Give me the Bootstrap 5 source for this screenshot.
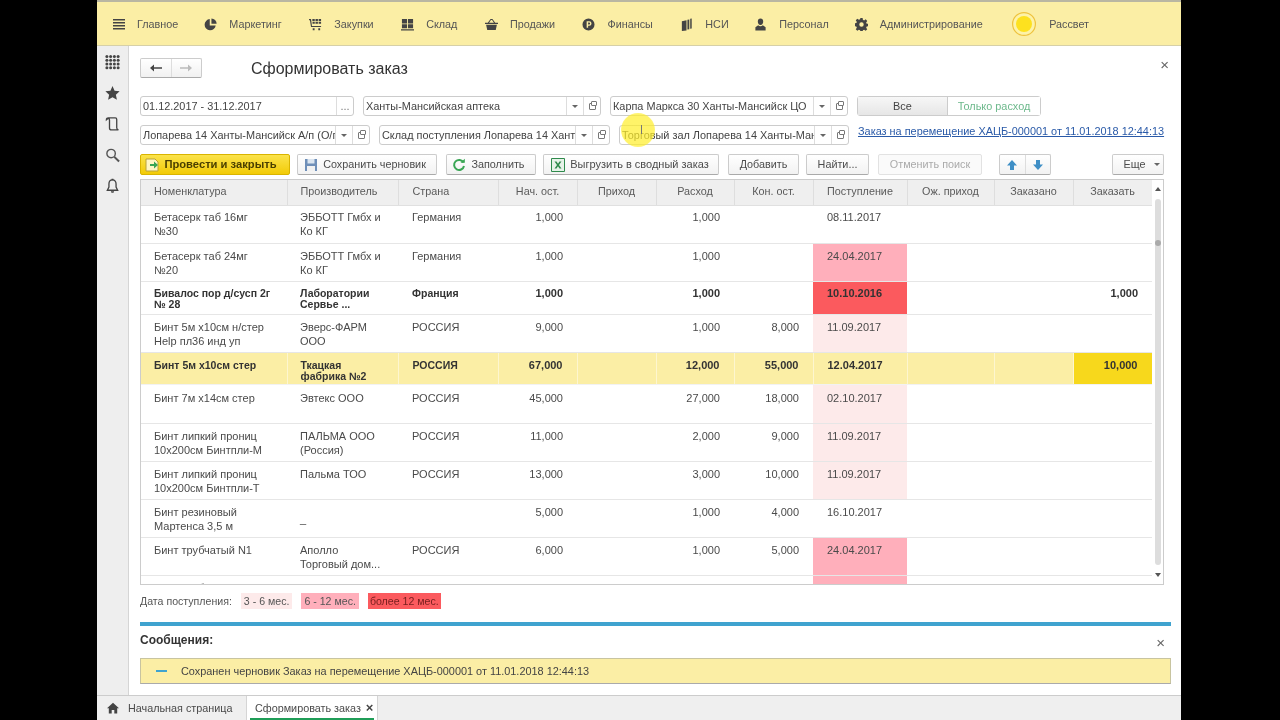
<!DOCTYPE html>
<html lang="ru">
<head>
<meta charset="utf-8">
<title>Сформировать заказ</title>
<link href="https://cdn.jsdelivr.net/npm/bootstrap@5.3.0/dist/css/bootstrap.min.css" rel="stylesheet">
<style>
html,body{height:720px;overflow:hidden}
body{background:#000;font-family:"Liberation Sans",Arial,sans-serif;font-size:10.9px;color:#4a4a4a}
.frame{width:1084px;height:720px;margin-left:97px;background:#fff;position:relative;display:flex;flex-direction:column;filter:blur(.3px)}
.topbar{height:46px;flex:none;background:#fbeea5;border-top:2px solid #b9b6a2;border-bottom:1px solid #d6d0a8;padding:1px 0 0 16px;gap:27.5px;color:#555;font-size:10.8px}
.topitem{gap:12px;white-space:nowrap}
.topitem svg{width:13px;height:13px;fill:#444;flex:none}
.topitem svg.burger{width:12px}
.topitem.shift1{margin-left:-1.5px}
.topitem.shift2{margin-left:-2px}
.topitem.logoitem{gap:13px;margin-left:2px}
.topitem.logoitem svg{width:24px;height:24px}
.mainzone{flex:1;min-height:0}
.sidebar{width:32px;flex:none;background:#eee;border-right:1px solid #d5d5d5;padding-top:8px;gap:15px;align-items:center}
.sidebar svg{width:15px;height:16px;fill:#444}
.content{flex:1;min-width:0;padding:0 10px 0 11px;position:relative}
.titlerow{height:50px;padding-top:12px;flex:none}
.navbtns{width:62px;height:20px;border:1px solid #ccc;border-bottom-color:#aaa;border-radius:2px;background:linear-gradient(#fff,#f1f1f1)}
.navbtns span{flex:1;height:100%}
.navbtns span+span{border-left:1px solid #ddd}
.navbtns svg{width:14px;height:10px}
.formtitle{font-size:16px;color:#333;margin-left:49px;line-height:21px}
.closex{position:absolute;font-size:15px;line-height:14px;color:#666}
.cx1{right:12px;top:12px}
.cx2{right:16px;top:590px}
.formrow{height:20px;flex:none;gap:9px;margin-bottom:9px;width:1024px}
.fld{height:20px;border:1px solid #ccc;border-radius:3px;background:#fff;color:#444;line-height:18px;flex:none;display:flex}
.fld b{font-weight:400;flex:1;min-width:0;overflow:hidden;white-space:nowrap;padding-left:2px}
.fld i{font-style:normal;width:17px;flex:none;border-left:1px solid #ddd;display:flex;align-items:center;justify-content:center;color:#777}
.tri{width:0;height:0;border:3px solid transparent;border-top:3.5px solid #666;border-bottom:0}
.opn{width:7px;height:7px;border:1px solid #777;border-radius:1px;position:relative;background:#fff}
.opn:before{content:"";position:absolute;left:1.5px;top:-3px;width:6px;height:5px;border:1px solid #777;background:#fff;border-radius:1px}
.w1a{width:214px}.w1b{width:238px}.w1c{width:238px}
.w2a{width:230px}.w2b{width:231px}.w2c{width:230px}
.tumbler{width:184px;height:20px;border:1px solid #ccc;border-radius:3px;text-align:center;line-height:18px;flex:none}
.tumbler span:first-child{width:90px;background:linear-gradient(#f7f7f7,#e6e6e6);border-right:1px solid #ccc;color:#444}
.tumbler span:last-child{flex:1;color:#6db98c;background:#fff}
.doclink{color:#2a5aa8;text-decoration:underline;white-space:nowrap;font-size:10.9px;line-height:13px}
.cmdrow{height:21px;flex:none;width:1024px;margin-bottom:4px}
.cmdbtn.btn{height:21px;padding:0;border:1px solid #ccc;border-bottom-color:#aaa;border-radius:2px;background:linear-gradient(#fff,#f2f2f2);color:#4c4c4c;font-size:10.8px;line-height:19px;display:flex;align-items:center;justify-content:center;gap:5px;flex:none;white-space:nowrap;--bs-btn-font-size:10.8px}
.cmdbtn svg{width:14px;height:14px;flex:none}
.cmdbtn.primecmd{background:linear-gradient(#fbe34b,#f2cb07);border-color:#d9b400;color:#4a3f00;font-weight:700;font-size:11.2px;padding-right:8px}
.cmdbtn.offcmd{color:#aaa;border-color:#e2e2e2;background:#fafafa}
.b1{width:150px}.cmdbtn.btn.b2{width:140px;margin-left:7px;padding-right:4px}.cmdbtn.btn.b3{width:90px;margin-left:9px;padding-right:5px}.cmdbtn.btn.b4{width:176px;margin-left:7px;font-size:11px;padding-right:2px}
.b5{width:71px;margin-left:9px}.b6{width:63px;margin-left:7px}.b7{width:104px;margin-left:9px}
.b8{width:52px;margin-left:17px;gap:0!important}.b9{width:52px;margin-left:61px;gap:9px!important;padding-left:8px!important}
.b8 span{flex:1;height:100%;display:flex;align-items:center;justify-content:center}
.b8 span+span{border-left:1px solid #ddd}
.b8 svg{width:12px;height:12px;fill:#3f8fc6}
.gridbox{height:406px;width:1024px;flex:none;border:1px solid #ccc;overflow:hidden}
.gridclip{width:1011px;height:404px;overflow:hidden;flex:none}
.orders{table-layout:fixed;width:1011px;margin:0;color:#4a4a4a;font-size:11px;line-height:14px}
.c146{width:146px}.c111{width:111px}.c100{width:100px}.c79{width:79px}.c78{width:78px}.c94{width:94px}.c87{width:87px}
.orders>thead>tr>th{height:25px;padding:0 0 2px;background:#efefef;font-weight:400;font-size:10.8px;color:#5a5a5a;text-align:center;vertical-align:middle;border:0;border-right:1px solid #dedede;border-bottom:1px solid #e0e0e0}
.orders>thead>tr>th.lft{text-align:left;padding-left:13px}
.orders>thead>tr>th.lft:nth-child(3){padding-left:14px}
.orders>tbody>tr>td{padding:5px 14px 0 13px;vertical-align:top;border:0;border-bottom:1px solid #e6e6e6}
.orders>tbody>tr>td:nth-child(3){padding-left:14px}
.orders>tbody>tr:first-child>td{padding-top:4px}
.orders>tbody>tr>td.num{text-align:right}
.orders>tbody>tr>td.dt{padding:5px 4px 0 14px}
.orders>tbody>tr:first-child>td.dt{padding-top:4px}
.orders>tbody>tr>td.dash{padding-top:12px}
.rowh{height:38px}
.rowb{height:33px}
.rowb2{height:32px}
.rowt{height:39px}
.orders>tbody>tr.rowt>td,.orders>tbody>tr.rowt>td.dt{padding-top:6px}
.orders>tbody>tr.rowb>td,.orders>tbody>tr.rowb2>td{font-weight:700;font-size:10.5px;line-height:11px;padding-top:6px;color:#333;padding-right:2px}
.orders>tbody>tr.rowb2>td{padding-top:7px}
.orders>tbody>tr.rowb>td.num,.orders>tbody>tr.rowb2>td.num{padding-right:14px}
.orders>tbody>tr.rowb>td.num,.orders>tbody>tr.rowb2>td.num,.orders>tbody>tr.rowb>td.dt,.orders>tbody>tr.rowb2>td.dt{font-size:11px}
.orders>tbody>tr.rowb2>td{background:#fbeea5;border-right:1px solid #fdf6cf;border-bottom-color:#f2f2f2}
.orders>tbody>tr>td.ag3{background:#fdeaea}
.orders>tbody>tr>td.ag6{background:#ffafbb}
.orders>tbody>tr>td.ag12{background:#fb5a5e}
.orders>tbody>tr.rowb2>td.curcell{background:#f7d81c}
.scrolly{flex:1;position:relative;background:#fff}
.scrolly .up{position:absolute;left:3px;top:7px;width:0;height:0;border:3px solid transparent;border-bottom:4px solid #555;border-top:0}
.scrolly .dn{position:absolute;left:3px;bottom:7px;width:0;height:0;border:3px solid transparent;border-top:4px solid #555;border-bottom:0}
.scrolly .trk{position:absolute;left:3px;top:19px;bottom:19px;width:6px;background:#ddd;border-radius:3px}
.scrolly .thm{position:absolute;left:3px;top:60px;width:6px;height:6px;background:#aaa;border-radius:3px}
.legend{height:37px;flex:none;gap:9px;padding-top:8px;color:#555;font-size:10.6px}
.legend span{padding:0 3px;line-height:16px;height:16px}
.legend .lg0{padding:0}
.legend .lg12{padding:0 2px}
.lg3{background:#fdeaea}.lg6{background:#ffafbb}.lg12{background:#fb5a5e;color:#7a2020}
.blueline{height:4px;flex:none;width:1031px;background:#3fa3cf}
.msgtitle{font-weight:700;font-size:12px;height:32px;line-height:29px;color:#333;flex:none}
.msgbox{width:1031px;height:26px;flex:none;background:#fbeea5;border:1px solid #c8c4a0;border-bottom-color:#aaa;padding-left:15px;gap:14px;color:#444;font-size:10.9px}
.msgbox u{width:11px;height:2px;background:#3fa3cf;display:block;flex:none}
.tabbar{height:25px;flex:none;background:#efefef;border-top:1px solid #ccc;padding-left:10px;position:relative;color:#4a4a4a;white-space:nowrap;font-size:10.8px}
.tabhome{gap:9px;width:139px}
.tabhome svg{width:12px;height:12px;fill:#444}
.tabactive{width:132px;height:24px;background:#fff;border-left:1px solid #d5d5d5;border-right:1px solid #d5d5d5;position:relative;padding-left:8px;gap:5px}
.tabactive:after{content:"";position:absolute;left:3px;right:3px;bottom:0;height:2px;background:#1f9d57}
.tabactive b{font-size:13px;font-weight:700;color:#444}
.mousehi{position:absolute;left:492px;top:67px;width:34px;height:34px;border-radius:50%;background:radial-gradient(circle,rgba(255,238,40,.7) 65%,rgba(255,238,40,.2) 100%);pointer-events:none}
.mousehi:after{content:"";position:absolute;left:20px;top:12px;width:1px;height:9px;background:#777}
</style>
</head>
<body>
<div class="frame">
  <nav class="topbar d-flex align-items-center">
    <div class="topitem d-flex align-items-center"><svg class="burger" viewBox="0 0 12 13"><path d="M0 1h12v1.500H0zM0 4h12v1.500H0zM0 7h12v1.500H0zM0 10h12v1.500H0z"/></svg><span>Главное</span></div>
    <div class="topitem shift1 d-flex align-items-center"><svg viewBox="0 0 14 14"><path d="M6.200 1.200A6 6 0 1 0 12.600 8H6.200z"/><path d="M8 .6v5.600h5.600A5.600 5.600 0 0 0 8 .6z"/></svg><span>Маркетинг</span></div>
    <div class="topitem d-flex align-items-center"><svg viewBox="0 0 14 14"><path d="M0 1h2.200l1 7.500H13v1.300H2.200L1 2.300H0zM3.600 1h2.600v2.200H3.600zM7 1h2.600v2.200H7zM10.400 1H13v2.200h-2.600zM3.800 4h2.400v2.200H3.800zM7 4h2.600v2.200H7zM10.400 4H13v2.200h-2.600zM4 11h2v2.200H4zM10 11h2v2.200h-2z"/></svg><span>Закупки</span></div>
    <div class="topitem d-flex align-items-center"><svg viewBox="0 0 14 14"><path d="M1 1h5.500v4.800H1zM7.500 1H13v4.800H7.500zM1 6.800h5.500v4.200H1zM7.500 6.800H13v4.200H7.500zM0 12h14v1.400H0z"/></svg><span>Склад</span></div>
    <div class="topitem d-flex align-items-center"><svg viewBox="0 0 14 14"><path d="M0 5h14v1.500H0zM1.200 7.400h11.600L11.600 13H2.400zM3 5l3-4h2l3 4H9.600L7.600 2.200H6.400L4.400 5z"/></svg><span>Продажи</span></div>
    <div class="topitem d-flex align-items-center"><svg viewBox="0 0 14 14"><path fill-rule="evenodd" d="M7 .5a6.500 6.500 0 1 1 0 13 6.500 6.500 0 0 1 0-13zM5 3.500v7h1.600V8.400h1.200a2.400 2.400 0 0 0 0-4.900zm1.600 1.400h1.100a1 1 0 0 1 0 2.100H6.600z"/></svg><span>Финансы</span></div>
    <div class="topitem d-flex align-items-center"><svg viewBox="0 0 14 14"><path d="M2 3.500l5-1v11l-5 .5zM8 2l2-.5v10.600l-2 .4zM11 .8l1.600-.3v10.800l-1.600.3z"/></svg><span>НСИ</span></div>
    <div class="topitem shift2 d-flex align-items-center"><svg viewBox="0 0 14 14"><path d="M7 .5c1.900 0 2.900 1.400 2.900 3.200S8.900 7.500 7 7.500 4.100 5.500 4.100 3.700 5.100.5 7 .5zM4.500 7.800c.7.600 1.500 1 2.500 1s1.800-.4 2.500-1L12.500 10v3.500h-11V10z"/></svg><span>Персонал</span></div>
    <div class="topitem shift1 d-flex align-items-center"><svg viewBox="0 0 14 14"><path fill-rule="evenodd" d="M5.800 0h2.400l.3 2 1.300.6 1.700-1.200 1.700 1.700-1.200 1.700.6 1.300 2 .3v2.400l-2 .3-.6 1.300 1.200 1.700-1.700 1.700-1.700-1.200-1.300.6-.3 2H5.800l-.3-2-1.300-.6-1.700 1.200-1.700-1.700 1.200-1.700-.6-1.300-2-.3V5.800l2-.3.6-1.300L.8 2.500 2.500.8l1.700 1.200 1.300-.6zM7 4.600a2.400 2.400 0 1 0 0 4.800 2.400 2.400 0 0 0 0-4.800z"/></svg><span>Администрирование</span></div>
    <div class="topitem logoitem d-flex align-items-center"><svg viewBox="0 0 24 24"><circle cx="12" cy="12" r="11.400" fill="#fdf2a8" stroke="#eec23e" stroke-width="1.200"/><circle cx="12" cy="12" r="8" fill="#fde11f"/></svg><span>Рассвет</span></div>
  </nav>
  <div class="mainzone d-flex">
    <aside class="sidebar d-flex flex-column">
      <svg viewBox="0 0 16 16"><g><circle cx="2" cy="2" r="1.600"/><circle cx="6" cy="2" r="1.600"/><circle cx="10" cy="2" r="1.600"/><circle cx="14" cy="2" r="1.600"/><circle cx="2" cy="6" r="1.600"/><circle cx="6" cy="6" r="1.600"/><circle cx="10" cy="6" r="1.600"/><circle cx="14" cy="6" r="1.600"/><circle cx="2" cy="10" r="1.600"/><circle cx="6" cy="10" r="1.600"/><circle cx="10" cy="10" r="1.600"/><circle cx="14" cy="10" r="1.600"/><circle cx="2" cy="14" r="1.600"/><circle cx="6" cy="14" r="1.600"/><circle cx="10" cy="14" r="1.600"/><circle cx="14" cy="14" r="1.600"/></g></svg>
      <svg viewBox="0 0 16 16"><path d="M8 .6l2.200 5 5.400.6-4 3.600 1.100 5.300L8 12.400l-4.700 2.700 1.100-5.300-4-3.600 5.400-.6z"/></svg>
      <svg viewBox="0 0 16 16"><path fill="none" stroke="#444" stroke-width="1.400" d="M1.500 3.500C1.500 2 2.500 1.500 3.500 1.500h7.500c1 0 1.500.7 1.500 1.700v8.800c0 1 .5 1.800 1.800 2.300H7c-1.400 0-2.200-.8-2.200-2.100V3.600c0-1.300-1.200-2-3.300-.1z"/></svg>
      <svg viewBox="0 0 16 16"><path fill="none" stroke="#555" stroke-width="1.500" d="M6.500 2a4.500 4.500 0 1 1 0 9 4.500 4.500 0 0 1 0-9z"/><path fill="none" stroke="#555" stroke-width="2.200" d="M10 10l5 5"/></svg>
      <svg viewBox="0 0 16 16"><path fill="none" stroke="#444" stroke-width="1.400" d="M8 1.500c-2.600 0-3.800 2-3.800 4.300v3.400L2.500 12.500h11l-1.700-3.300V5.800c0-2.300-1.200-4.300-3.800-4.300z"/><path d="M6.300 13.500h3.400c0 1-.7 1.700-1.700 1.700s-1.700-.7-1.700-1.700zM7 .3h2v1.500H7z"/></svg>
    </aside>
    <section class="content d-flex flex-column">
      <div class="titlerow d-flex align-items-start">
        <div class="navbtns d-flex">
          <span class="d-flex align-items-center justify-content-center"><svg viewBox="0 0 14 10"><path d="M1 5l4-3.500v2.700h8v1.600H5v2.700z" fill="#444"/></svg></span>
          <span class="d-flex align-items-center justify-content-center"><svg viewBox="0 0 14 10"><path d="M13 5L9 1.500v2.700H1v1.600h8v2.700z" fill="#bbb"/></svg></span>
        </div>
        <div class="formtitle">Сформировать заказ</div>
      </div>
      <span class="closex cx1">×</span>
      <div class="formrow d-flex">
        <div class="fld w1a"><b>01.12.2017 - 31.12.2017</b><i>...</i></div>
        <div class="fld w1b"><b>Ханты-Мансийская аптека</b><i><span class="tri"></span></i><i><span class="opn"></span></i></div>
        <div class="fld w1c"><b>Карпа Маркса 30 Ханты-Мансийск ЦО</b><i><span class="tri"></span></i><i><span class="opn"></span></i></div>
        <div class="tumbler d-flex"><span>Все</span><span>Только расход</span></div>
      </div>
      <div class="formrow d-flex">
        <div class="fld w2a"><b>Лопарева 14 Ханты-Мансийск А/п (О/п)</b><i><span class="tri"></span></i><i><span class="opn"></span></i></div>
        <div class="fld w2b"><b>Склад поступления Лопарева 14 Ханты</b><i><span class="tri"></span></i><i><span class="opn"></span></i></div>
        <div class="fld w2c"><b>Торговый зал Лопарева 14 Ханты-Мансийск</b><i><span class="tri"></span></i><i><span class="opn"></span></i></div>
        <a class="doclink" href="#">Заказ на перемещение ХАЦБ-000001 от 11.01.2018 12:44:13</a>
      </div>
      <div class="cmdrow d-flex">
        <button class="btn cmdbtn primecmd b1"><svg viewBox="0 0 14 14"><path d="M1 1h9l3 3v9H1z" fill="#fff6c4" stroke="#b9a23a"/><path d="M5 6h4V3.500L13 7l-4 3.500V8H5z" fill="#3aa655"/></svg>Провести и закрыть</button>
        <button class="btn cmdbtn b2"><svg viewBox="0 0 14 14"><path d="M1 1h12v12H1z" fill="#6f8fb8"/><path d="M3.500 1h7v4.500h-7z" fill="#dbe5f0"/><path d="M3 8h8v5H3z" fill="#f1f1f1"/></svg>Сохранить черновик</button>
        <button class="btn cmdbtn b3"><svg viewBox="0 0 14 14"><path fill="none" stroke="#3aa655" stroke-width="2" d="M11.500 4.500A5 5 0 1 0 12 8"/><path d="M8.500 4.800h4.300V.8z" fill="#3aa655"/></svg>Заполнить</button>
        <button class="btn cmdbtn b4"><svg viewBox="0 0 14 14"><path d="M.5.500h13v13H.500z" fill="#e6f2e8" stroke="#2f8a4c"/><path d="M3.500 3.500h2l1.500 2.300 1.500-2.300h2L8 7l2.500 3.500h-2L7 8.200l-1.500 2.300h-2L6 7z" fill="#2f8a4c"/></svg>Выгрузить в сводный заказ</button>
        <button class="btn cmdbtn b5">Добавить</button>
        <button class="btn cmdbtn b6">Найти...</button>
        <button class="btn cmdbtn offcmd b7">Отменить поиск</button>
        <button class="btn cmdbtn b8"><span><svg viewBox="0 0 12 12"><path d="M6 1l5 5.500H8V11H4V6.500H1z"/></svg></span><span><svg viewBox="0 0 12 12"><path d="M6 11L1 5.500h3V1h4v4.500h3z"/></svg></span></button>
        <button class="btn cmdbtn b9">Еще<span class="tri"></span></button>
      </div>
      <div class="gridbox d-flex">
        <div class="gridclip">
        <table class="table orders">
          <colgroup><col class="c146"><col class="c111"><col class="c100"><col class="c79"><col class="c79"><col class="c78"><col class="c79"><col class="c94"><col class="c87"><col class="c79"><col class="c79"></colgroup>
          <thead><tr>
            <th class="lft">Номенклатура</th><th class="lft">Производитель</th><th class="lft">Страна</th><th>Нач. ост.</th><th>Приход</th><th>Расход</th><th>Кон. ост.</th><th>Поступление</th><th>Ож. приход</th><th>Заказано</th><th>Заказать</th>
          </tr></thead>
          <tbody>
            <tr class="rowh"><td>Бетасерк таб 16мг<br>№30</td><td>ЭББОТТ Гмбх и<br>Ко КГ</td><td>Германия</td><td class="num">1,000</td><td></td><td class="num">1,000</td><td></td><td class="dt">08.11.2017</td><td></td><td></td><td></td></tr>
            <tr class="rowh"><td>Бетасерк таб 24мг<br>№20</td><td>ЭББОТТ Гмбх и<br>Ко КГ</td><td>Германия</td><td class="num">1,000</td><td></td><td class="num">1,000</td><td></td><td class="dt ag6">24.04.2017</td><td></td><td></td><td></td></tr>
            <tr class="rowb"><td>Бивалос пор д/сусп 2г<br>№ 28</td><td>Лаборатории<br>Сервье ...</td><td>Франция</td><td class="num">1,000</td><td></td><td class="num">1,000</td><td></td><td class="dt ag12">10.10.2016</td><td></td><td></td><td class="num">1,000</td></tr>
            <tr class="rowh"><td>Бинт 5м х10см н/стер<br>Help пл36 инд уп</td><td>Эверс-ФАРМ<br>ООО</td><td>РОССИЯ</td><td class="num">9,000</td><td></td><td class="num">1,000</td><td class="num">8,000</td><td class="dt ag3">11.09.2017</td><td></td><td></td><td></td></tr>
            <tr class="rowb2"><td>Бинт 5м х10см стер</td><td>Ткацкая<br>фабрика №2</td><td>РОССИЯ</td><td class="num">67,000</td><td></td><td class="num">12,000</td><td class="num">55,000</td><td class="dt">12.04.2017</td><td></td><td></td><td class="num curcell">10,000</td></tr>
            <tr class="rowt"><td>Бинт 7м х14см стер</td><td>Эвтекс ООО</td><td>РОССИЯ</td><td class="num">45,000</td><td></td><td class="num">27,000</td><td class="num">18,000</td><td class="dt ag3">02.10.2017</td><td></td><td></td><td></td></tr>
            <tr class="rowh"><td>Бинт липкий прониц<br>10х200см Бинтпли-М</td><td>ПАЛЬМА ООО<br>(Россия)</td><td>РОССИЯ</td><td class="num">11,000</td><td></td><td class="num">2,000</td><td class="num">9,000</td><td class="dt ag3">11.09.2017</td><td></td><td></td><td></td></tr>
            <tr class="rowh"><td>Бинт липкий прониц<br>10х200см Бинтпли-Т</td><td>Пальма ТОО</td><td>РОССИЯ</td><td class="num">13,000</td><td></td><td class="num">3,000</td><td class="num">10,000</td><td class="dt ag3">11.09.2017</td><td></td><td></td><td></td></tr>
            <tr class="rowh"><td>Бинт резиновый<br>Мартенса 3,5 м</td><td class="dash">_</td><td></td><td class="num">5,000</td><td></td><td class="num">1,000</td><td class="num">4,000</td><td class="dt">16.10.2017</td><td></td><td></td><td></td></tr>
            <tr class="rowh"><td>Бинт трубчатый N1</td><td>Аполло<br>Торговый дом...</td><td>РОССИЯ</td><td class="num">6,000</td><td></td><td class="num">1,000</td><td class="num">5,000</td><td class="dt ag6">24.04.2017</td><td></td><td></td><td></td></tr>
            <tr class="rowh"><td>Бинт трубчатый N2</td><td>Новатэкс</td><td>РОССИЯ</td><td class="num">7,000</td><td></td><td class="num">2,000</td><td class="num">5,000</td><td class="dt ag6">02.08.2017</td><td></td><td></td><td></td></tr>
          </tbody>
        </table>
        </div>
        <div class="scrolly"><span class="up"></span><span class="trk"></span><span class="thm"></span><span class="dn"></span></div>
      </div>
      <div class="legend d-flex align-items-start">
        <span class="lg0">Дата поступления:</span><span class="lg3">3 - 6 мес.</span><span class="lg6">6 - 12 мес.</span><span class="lg12">более 12 мес.</span>
      </div>
      <div class="blueline"></div>
      <div class="msgtitle">Сообщения:</div>
      <span class="closex cx2">×</span>
      <div class="msgbox d-flex align-items-center"><u></u><span>Сохранен черновик Заказ на перемещение ХАЦБ-000001 от 11.01.2018 12:44:13</span></div>
      <div class="mousehi"></div>
    </section>
  </div>
  <footer class="tabbar d-flex align-items-center">
    <div class="tabhome d-flex align-items-center"><svg viewBox="0 0 12 12"><path d="M6 .8L12 6.300h-1.800V11.500H7.300V8H4.700v3.500H1.800V6.300H0z"/></svg><span>Начальная страница</span></div>
    <div class="tabactive d-flex align-items-center"><span>Сформировать заказ</span><b>×</b></div>
  </footer>
</div>
<script src="https://cdn.jsdelivr.net/npm/bootstrap@5.3.0/dist/js/bootstrap.bundle.min.js"></script>
</body>
</html>
